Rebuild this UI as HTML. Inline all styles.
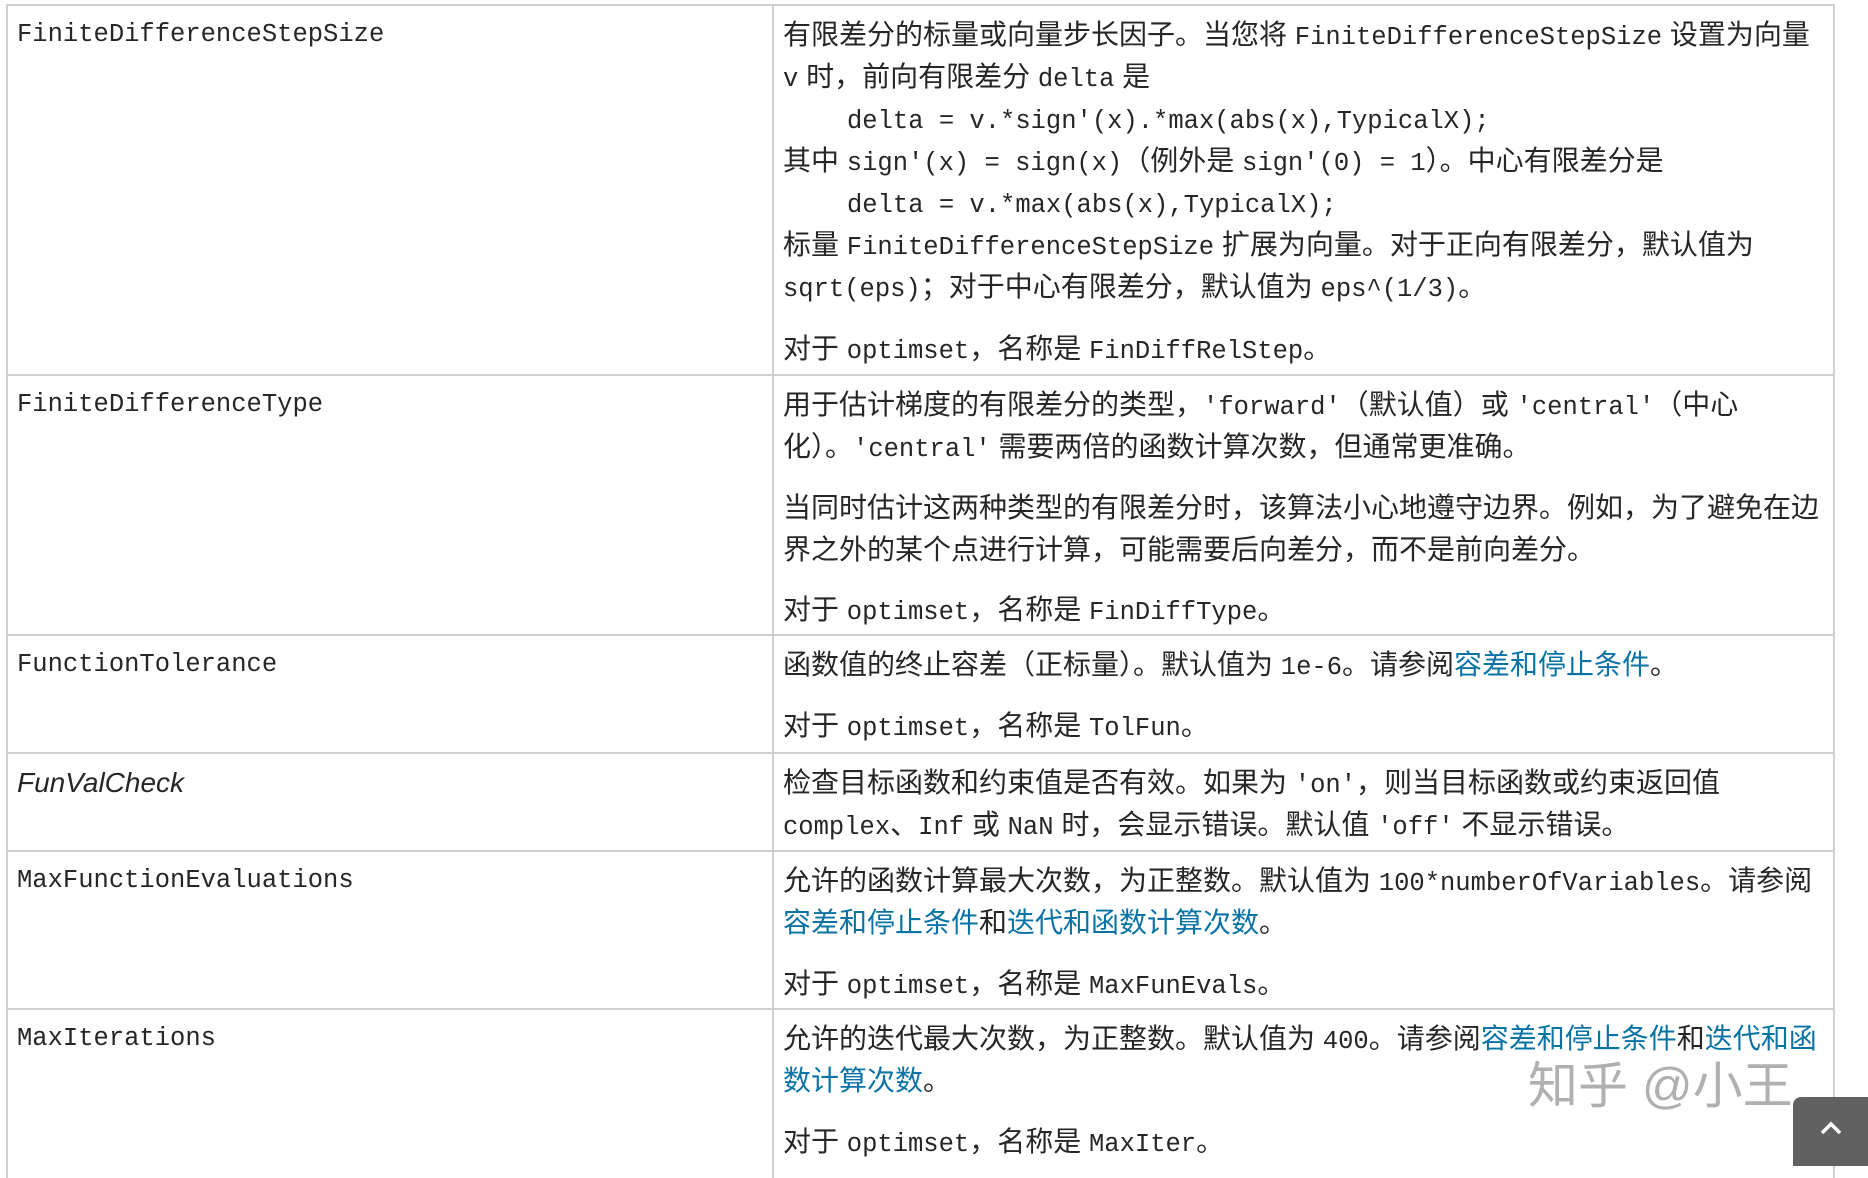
<!DOCTYPE html>
<html><head><meta charset="utf-8"><style>
html,body{margin:0;padding:0;background:#fff;width:1868px;height:1166px;overflow:hidden}
body{font-family:"Liberation Sans","Noto Sans CJK SC",sans-serif;font-size:28px;color:#262626}
.row{position:absolute;left:6px;width:1829px;border-top:2px solid #cfcfcf;box-sizing:border-box}
.l{position:absolute;left:0;top:0;bottom:0;width:768px;border-left:2px solid #cfcfcf;border-right:2px solid #cfcfcf;box-sizing:border-box;padding:8px 0 0 9px}
.r{position:absolute;left:768px;right:0;top:0;bottom:0;border-right:2px solid #cfcfcf;padding:8px 0 0 9px;box-sizing:border-box}
.ln{height:42px;line-height:42px;white-space:nowrap;overflow:visible}
code{font-family:"Liberation Mono",monospace;font-size:25.5px;line-height:1}
.l{font-family:"Liberation Mono",monospace;font-size:25.5px;line-height:42px}
a{color:#0a73a6;text-decoration:none}
.i{padding-left:64px}
.g{height:20px}
</style></head><body>
<div class="row" style="top:4px;height:371px">
<div class="l">FiniteDifferenceStepSize</div>
<div class="r">
<div class="ln">有限差分的标量或向量步长因子。当您将 <code>FiniteDifferenceStepSize</code> 设置为向量</div>
<div class="ln"><code>v</code> 时，前向有限差分 <code>delta</code> 是</div>
<div class="ln i"><code>delta = v.*sign′(x).*max(abs(x),TypicalX);</code></div>
<div class="ln">其中 <code>sign′(x) = sign(x)</code>（例外是 <code>sign′(0) = 1</code>）。中心有限差分是</div>
<div class="ln i"><code>delta = v.*max(abs(x),TypicalX);</code></div>
<div class="ln">标量 <code>FiniteDifferenceStepSize</code> 扩展为向量。对于正向有限差分，默认值为</div>
<div class="ln"><code>sqrt(eps)</code>；对于中心有限差分，默认值为 <code>eps^(1/3)</code>。</div>
<div class="g"></div>
<div class="ln">对于 <code>optimset</code>，名称是 <code>FinDiffRelStep</code>。</div>
</div></div>
<div class="row" style="top:374px;height:261px">
<div class="l">FiniteDifferenceType</div>
<div class="r">
<div class="ln">用于估计梯度的有限差分的类型，<code>'forward'</code>（默认值）或 <code>'central'</code>（中心</div>
<div class="ln">化）。<code>'central'</code> 需要两倍的函数计算次数，但通常更准确。</div>
<div style="height:19px"></div>
<div class="ln">当同时估计这两种类型的有限差分时，该算法小心地遵守边界。例如，为了避免在边</div>
<div class="ln">界之外的某个点进行计算，可能需要后向差分，而不是前向差分。</div>
<div style="height:18px"></div>
<div class="ln">对于 <code>optimset</code>，名称是 <code>FinDiffType</code>。</div>
</div></div>
<div class="row" style="top:634px;height:119px">
<div class="l">FunctionTolerance</div>
<div class="r">
<div class="ln">函数值的终止容差（正标量）。默认值为 <code>1e-6</code>。请参阅<a>容差和停止条件</a>。</div>
<div style="height:19px"></div>
<div class="ln">对于 <code>optimset</code>，名称是 <code>TolFun</code>。</div>
</div></div>
<div class="row" style="top:752px;height:99px">
<div class="l" style="font-family:'Liberation Sans',sans-serif;font-style:italic;font-size:28px">FunValCheck</div>
<div class="r">
<div class="ln">检查目标函数和约束值是否有效。如果为 <code>'on'</code>，则当目标函数或约束返回值</div>
<div class="ln"><code>complex</code>、<code>Inf</code> 或 <code>NaN</code> 时，会显示错误。默认值 <code>'off'</code> 不显示错误。</div>
</div></div>
<div class="row" style="top:850px;height:159px">
<div class="l">MaxFunctionEvaluations</div>
<div class="r">
<div class="ln">允许的函数计算最大次数，为正整数。默认值为 <code>100*numberOfVariables</code>。请参阅</div>
<div class="ln"><a>容差和停止条件</a>和<a>迭代和函数计算次数</a>。</div>
<div style="height:19px"></div>
<div class="ln">对于 <code>optimset</code>，名称是 <code>MaxFunEvals</code>。</div>
</div></div>
<div class="row" style="top:1008px;height:170px">
<div class="l">MaxIterations</div>
<div class="r">
<div class="ln">允许的迭代最大次数，为正整数。默认值为 <code>400</code>。请参阅<a>容差和停止条件</a>和<a>迭代和函</a></div>
<div class="ln"><a>数计算次数</a>。</div>
<div style="height:19px"></div>
<div class="ln">对于 <code>optimset</code>，名称是 <code>MaxIter</code>。</div>
</div></div>
<div style="position:absolute;left:1528px;top:1056px;font-size:50px;color:rgba(150,150,150,0.75);white-space:nowrap;line-height:60px">知乎 @小王</div>
<div style="position:absolute;left:1793px;top:1097px;width:75px;height:69px;background:#616161;border-radius:8px 0 0 0">
<svg width="75" height="69" viewBox="0 0 75 69"><path d="M29 36 L38 27 L47 36" stroke="#fff" stroke-width="3.5" fill="none"/></svg>
</div>
</body></html>
